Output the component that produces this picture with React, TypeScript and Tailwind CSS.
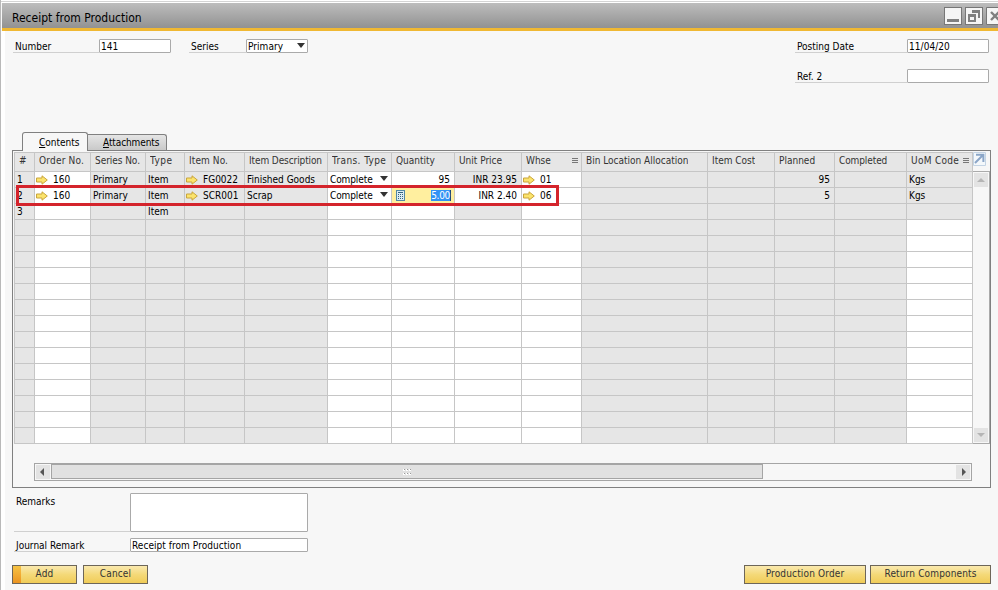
import type { ReactNode } from 'react';

interface Column {
  label: string;
  width: string;
  editable?: boolean;
  menu?: boolean;
  tracking?: string;
}

const columns: Column[] = [
  { label: '#', width: 'w-[20px]' },
  { label: 'Order No.', width: 'w-[56px]', editable: true, tracking: 'tracking-[0.2px]' },
  { label: 'Series No.', width: 'w-[55px]', tracking: 'tracking-[-0.05px]' },
  { label: 'Type', width: 'w-[39px]', tracking: 'tracking-[0.5px]' },
  { label: 'Item No.', width: 'w-[60px]', tracking: 'tracking-[0.1px]' },
  { label: 'Item Description', width: 'w-[83px]', tracking: 'tracking-[-0.1px]' },
  { label: 'Trans. Type', width: 'w-[64px]', editable: true, tracking: 'tracking-[0.4px]' },
  { label: 'Quantity', width: 'w-[63px]', editable: true },
  { label: 'Unit Price', width: 'w-[67px]', editable: true },
  { label: 'Whse', width: 'w-[60px]', editable: true, menu: true },
  { label: 'Bin Location Allocation', width: 'w-[126px]' },
  { label: 'Item Cost', width: 'w-[67px]' },
  { label: 'Planned', width: 'w-[60px]' },
  { label: 'Completed', width: 'w-[72px]', tracking: 'tracking-[-0.1px]' },
  { label: 'UoM Code', width: 'w-[66px]', editable: true, menu: true, tracking: 'tracking-[0.3px]' },
];

const UNIT_PRICE = 8;
const UOM = 14;

function LinkArrow() {
  return (
    <svg width="12" height="10" viewBox="0 0 12 10" className="shrink-0">
      <path d="M.5 3h5.5V.8L11.3 5 6 9.2V7H.5z" fill="#fbe36c" stroke="#c9a53c" />
    </svg>
  );
}

function Caret() {
  return (
    <svg width="8" height="5" viewBox="0 0 8 5" className="mb-[2px] shrink-0">
      <path d="M0 0h8L4 5z" fill="#333" />
    </svg>
  );
}

function Calculator() {
  return (
    <svg width="9" height="11" viewBox="0 0 9 11" shapeRendering="crispEdges">
      <path d="M.5.5h8v10h-8z" fill="#dcecf4" stroke="#5289a5" />
      <path d="M2 2h5v1H2zM2 4h1v1H2zM4 4h1v1H4zM6 4h1v1H6zM2 6h1v1H2zM4 6h1v1H4zM6 6h1v1H6zM2 8h1v1H2zM4 8h1v1H4zM6 8h1v1H6z" fill="#35647e" />
    </svg>
  );
}

function Linked({ children }: { children: ReactNode }) {
  return (
    <span className="-ml-px flex items-center gap-[5px]">
      <LinkArrow />
      <span>{children}</span>
    </span>
  );
}

function Choice({ children }: { children: ReactNode }) {
  return (
    <span className="flex w-full items-center justify-between pr-px">
      <span className="tracking-[-0.1px]">{children}</span>
      <Caret />
    </span>
  );
}

function Num({ children }: { children: ReactNode }) {
  return <span className="flex-1 pr-[2px] text-right">{children}</span>;
}

const rows: ReactNode[][] = [
  [
    '1', <Linked>160</Linked>, 'Primary', 'Item', <Linked>FG0022</Linked>, 'Finished Goods',
    <Choice>Complete</Choice>, <Num>95</Num>, <Num>INR 23.95</Num>, <Linked>01</Linked>,
    '', '', <Num>95</Num>, '', 'Kgs',
  ],
  [
    '2', <Linked>160</Linked>, 'Primary', 'Item', <Linked>SCR001</Linked>, 'Scrap',
    <Choice>Complete</Choice>,
    <span className="flex flex-1 items-center justify-between pl-[2px] pr-px">
      <Calculator />
      <span className="mb-px h-[11px] border-r border-[#1c4a78] bg-[#3293f5] leading-[11px] tracking-[-0.3px] text-white">5.00</span>
    </span>,
    <Num>INR 2.40</Num>, <Linked>06</Linked>, '', '', <Num>5</Num>, '', 'Kgs',
  ],
  ['3', '', '', 'Item'],
  ...Array.from({ length: 14 }, () => []),
];

function cellColor(row: number, col: number) {
  if (row === 1 && col === 7) return 'bg-[#ffef9f]';
  if (col === UOM && row < 3) return 'bg-[#e6e6e6]';
  if (col === UNIT_PRICE && (row === 0 || row === 2)) return 'bg-[#e6e6e6]';
  return columns[col].editable ? 'bg-white' : 'bg-[#e6e6e6]';
}

function Grid() {
  return (
    <div className="w-[959px] border-l border-t border-[#c6c6c6]">
      <div className="flex h-[19px]">
        {columns.map((col) => (
          <div
            key={col.label}
            className={`${col.width} flex shrink-0 items-center justify-between overflow-hidden whitespace-nowrap border-b border-r border-[#c6c6c6] bg-[#e6e6e6] pb-[2px] pl-[4px] text-[#333]`}
          >
            <span className={`min-w-0 overflow-hidden ${col.tracking ?? ''}`}>{col.label}</span>
            {col.menu && (
              <svg width="6" height="5" viewBox="0 0 6 5" className="mb-px ml-[3px] mr-[3px] shrink-0" shapeRendering="crispEdges">
                <path d="M0 .5h6M0 2.5h6M0 4.5h6" stroke="#777" />
              </svg>
            )}
          </div>
        ))}
      </div>
      {rows.map((row, r) => (
        <div key={r} className="flex h-[16px]">
          {columns.map((col, c) => (
            <div
              key={col.label}
              className={`${col.width} ${cellColor(r, c)} flex shrink-0 items-center overflow-hidden whitespace-nowrap border-b border-r border-[#c6c6c6] px-[2px]`}
            >
              {row[c]}
            </div>
          ))}
        </div>
      ))}
    </div>
  );
}

function Field({ label, value, labelWidth, inputWidth, select }: {
  label: string;
  value?: string;
  labelWidth: string;
  inputWidth: string;
  select?: boolean;
}) {
  return (
    <div className="flex h-[14px]">
      <div className={`${labelWidth} border-b border-[#d0d0d0] pl-[2px] leading-[15px]`}>{label}</div>
      <div className={`${inputWidth} flex items-center justify-between rounded-[1px] border border-[#aaa] bg-white pl-[1px] pr-[2px]`}>
        <span className="whitespace-nowrap pt-px tracking-[0.05px]">{value}</span>
        {select && <Caret />}
      </div>
    </div>
  );
}

function Button({ label, width, primary }: { label: string; width: string; primary?: boolean }) {
  return (
    <button className={`${width} relative flex h-[19px] items-center justify-center border border-[#6d6659] bg-linear-to-b from-[#fae9ae] via-[#f4d978] via-50% to-[#f0cc57] pb-px tracking-[0.15px] text-[#333]`}>
      {primary && <span className="absolute inset-y-0 left-0 w-[8px] bg-linear-to-b from-[#f6c344] to-[#ec9420]" />}
      {label}
    </button>
  );
}

function WindowControls() {
  return (
    <div className="flex gap-[3px] pt-[4px]">
      <svg width="18" height="18" viewBox="0 0 18 18" shapeRendering="crispEdges">
        <path d="M.5.5h17v17H.5z" fill="#f5f5f5" stroke="#777" />
        <path d="M3 12h12v3H3z" fill="#808080" />
      </svg>
      <svg width="18" height="18" viewBox="0 0 18 18" shapeRendering="crispEdges">
        <path d="M.5.5h17v17H.5z" fill="#f5f5f5" stroke="#777" />
        <path d="M7 3h8v8h-2V6H7z" fill="#808080" />
        <path d="M3 7h8v8H3zM5 10v3h4v-3z" fill="#808080" fillRule="evenodd" />
      </svg>
      <svg width="18" height="18" viewBox="0 0 18 18">
        <path d="M.5.5h17v17H.5z" fill="#f5f5f5" stroke="#777" />
        <path d="M5 5l8 8M13 5l-8 8" stroke="#808080" strokeWidth="2.4" />
      </svg>
    </div>
  );
}

function VerticalScroll() {
  return (
    <div className="flex w-[17px] flex-col">
      <div className="h-[20px] border-b border-[#aaa]">
        <svg width="13" height="14" viewBox="0 0 13 14">
          <path d="M.5.5h12v13H.5z" fill="#f4f8fb" stroke="#c4d4e4" />
          <path d="M2 11l8-8M3 2.8h7.4V10" fill="none" stroke="#8ba6c8" strokeWidth="2" />
        </svg>
      </div>
      <div className="flex flex-1 flex-col items-center justify-between border-b border-r border-[#aaa] py-px">
        <div className="flex h-[14px] w-[14px] items-center justify-center bg-[#e3e3e3]">
          <svg width="8" height="4" viewBox="0 0 8 4"><path d="M0 4h8L4 0z" fill="#b5b5b5" /></svg>
        </div>
        <div className="flex h-[14px] w-[14px] items-center justify-center bg-[#e3e3e3]">
          <svg width="8" height="4" viewBox="0 0 8 4"><path d="M0 0h8L4 4z" fill="#b5b5b5" /></svg>
        </div>
      </div>
    </div>
  );
}

function HorizontalScroll() {
  return (
    <div className="ml-[20px] mt-[19px] flex h-[18px] w-[938px] justify-between border border-[#a5a5a5] bg-[#f7f7f7]">
      <div className="flex">
        <div className="m-px flex w-[14px] items-center justify-center bg-[#e3e3e3]">
          <svg width="4" height="8" viewBox="0 0 4 8" className="-translate-x-px"><path d="M4 0v8L0 4z" fill="#555" /></svg>
        </div>
        <div className="flex h-[15px] w-[712px] items-center justify-center border border-[#a5a5a5] bg-[#e1e1e1]">
          <svg width="8" height="6" viewBox="0 0 8 6" shapeRendering="crispEdges">
            <path d="M0 0h2v2H0zM3 0h2v2H3zM6 0h2v2H6zM0 4h2v2H0zM3 4h2v2H3zM6 4h2v2H6z" fill="#fff" />
            <path d="M1 0h1v1H1zM4 0h1v1H4zM7 0h1v1H7zM1 4h1v1H1zM4 4h1v1H4zM7 4h1v1H7z" fill="#999" />
          </svg>
        </div>
      </div>
      <div className="m-px flex w-[14px] items-center justify-center bg-[#e3e3e3]">
        <svg width="4" height="8" viewBox="0 0 4 8" className="translate-x-px"><path d="M0 0v8l4-4z" fill="#555" /></svg>
      </div>
    </div>
  );
}

export default function App() {
  return (
    <div className="h-[590px] w-[998px] overflow-hidden border-l border-[#b9b9b9] bg-[#f7f7f7] font-['DejaVu_Sans_Condensed','DejaVu_Sans',sans-serif] text-[10px] leading-[14px] text-black">
      {/* Title bar */}
      <div className="h-[3px] bg-white pt-px">
        <div className="h-px bg-[#d4d4d4]" />
      </div>
      <header className="ml-px flex h-[28px] justify-between overflow-hidden border-b-[3px] border-[#f0b833] bg-linear-to-b from-[#bdbdbd] to-[#929292] pl-[10px]">
        <h1 className="pt-[6px] text-[12px] leading-[18px] text-black">Receipt from Production</h1>
        <div className="w-[54px]"><div className="w-[60px]"><WindowControls /></div></div>
      </header>

      <main className="h-[559px] border-l-4 border-white pl-[7px]">
        {/* Document header */}
        <section className="flex h-[101px] justify-between pl-px pr-[9px] pt-[8px]">
          <div className="flex gap-[18px]">
            <Field label="Number" value="141" labelWidth="w-[86px]" inputWidth="w-[72px]" />
            <Field label="Series" value="Primary" labelWidth="w-[57px]" inputWidth="w-[62px]" select />
          </div>
          <div className="flex flex-col gap-4">
            <Field label="Posting Date" value="11/04/20" labelWidth="w-[112px]" inputWidth="w-[82px]" />
            <Field label="Ref. 2" labelWidth="w-[112px]" inputWidth="w-[82px]" />
          </div>
        </section>

        {/* Tabs */}
        <nav className="relative z-10 -mb-px flex h-[19px] items-end pl-[10px]">
          <div className="h-[19px] w-[66px] rounded-t-[3px] border border-b-0 border-[#808080] bg-[#f7f7f7] pl-[16px] pt-[3px]">
            <span className="underline">C</span>ontents
          </div>
          <div className="mb-px h-[16px] w-[79px] rounded-tr-[3px] border border-b-0 border-l-0 border-[#808080] bg-linear-to-b from-[#e5e5e5] to-[#c9c9c9] pl-[15px] pt-px tracking-[-0.1px]">
            <span className="underline">A</span>ttachments
          </div>
        </nav>

        {/* Lines */}
        <section className="relative h-[338px] w-[979px] border border-[#808080] pl-px pt-px">
          <div className="flex">
            <Grid />
            <VerticalScroll />
          </div>
          <HorizontalScroll />
          <div className="pointer-events-none absolute left-[3px] top-[34px] h-[21px] w-[543px] border-3 border-[#d4242c]" />
        </section>

        {/* Remarks */}
        <section className="flex flex-col gap-[6px] pl-[2px] pt-[5px]">
          <div className="flex h-[39px]">
            <div className="w-[116px] border-b border-[#d0d0d0] pl-[2px] pt-[2px]">Remarks</div>
            <div className="w-[178px] rounded-[1px] border border-[#aaa] bg-white" />
          </div>
          <Field label="Journal Remark" value="Receipt from Production" labelWidth="w-[116px]" inputWidth="w-[178px]" />
        </section>

        <footer className="mt-[13px] flex justify-between pr-[7px]">
          <div className="flex gap-[6px]">
            <Button label="Add" width="w-[65px]" primary />
            <Button label="Cancel" width="w-[65px]" />
          </div>
          <div className="flex gap-[4px]">
            <Button label="Production Order" width="w-[122px]" />
            <Button label="Return Components" width="w-[121px]" />
          </div>
        </footer>
      </main>
    </div>
  );
}
